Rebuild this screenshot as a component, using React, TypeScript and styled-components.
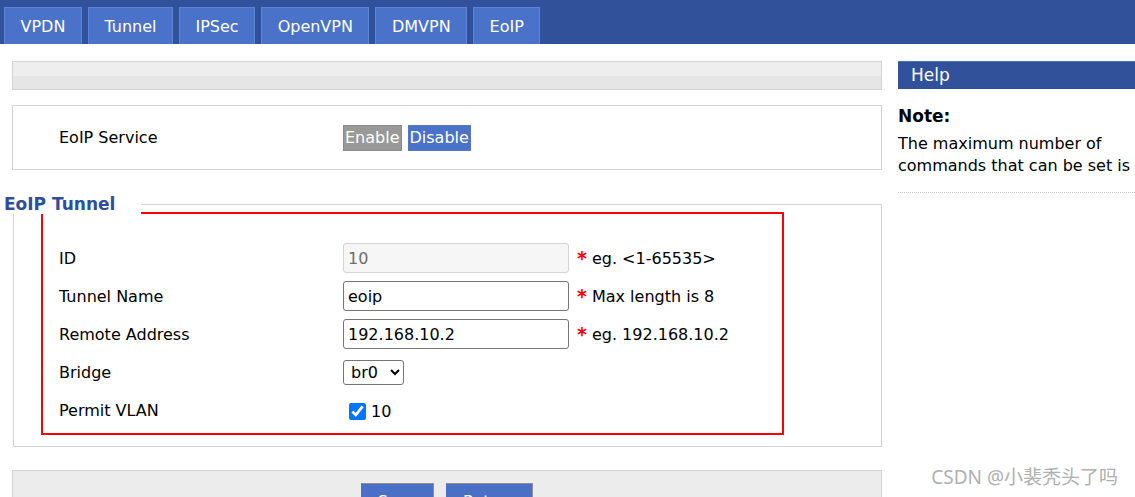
import React from "react";
import styled, { createGlobalStyle } from "styled-components";

const GlobalStyle = createGlobalStyle`
  html, body {
    margin: 0;
    padding: 0;
    background: #ffffff;
    overflow: hidden;
  }
  body {
    font-family: "DejaVu Sans", Verdana, sans-serif;
    font-size: 16px;
    color: #000000;
  }
`;

const tabs = ["VPDN", "Tunnel", "IPSec", "OpenVPN", "DMVPN", "EoIP"];

type FieldProps = {
  label: string;
  children: React.ReactNode;
};

const FormRow: React.FC<FieldProps> = ({ label, children }) => (
  <Row>
    <Label>{label}</Label>
    <Field>{children}</Field>
  </Row>
);

const App: React.FC = () => {
  return (
    <Page>
      <GlobalStyle />
      <TopBar>
        {tabs.map((t) => (
          <Tab key={t}>{t}</Tab>
        ))}
      </TopBar>

      <Content>
        <Main>
          <StatusBar />

          <ServiceBox>
            <Label>EoIP Service</Label>
            <ToggleGroup>
              <ToggleButton $active={false}>Enable</ToggleButton>
              <ToggleButton $active>Disable</ToggleButton>
            </ToggleGroup>
          </ServiceBox>

          <TunnelSection>
            <Legend>EoIP Tunnel</Legend>
            <Fieldset>
              <Highlight>
                <FormRow label="ID">
                  <TextInput disabled defaultValue="10" />
                  <Required>*</Required>
                  <Hint>eg. &lt;1-65535&gt;</Hint>
                </FormRow>
                <FormRow label="Tunnel Name">
                  <TextInput defaultValue="eoip" />
                  <Required>*</Required>
                  <Hint>Max length is 8</Hint>
                </FormRow>
                <FormRow label="Remote Address">
                  <TextInput defaultValue="192.168.10.2" />
                  <Required>*</Required>
                  <Hint>eg. 192.168.10.2</Hint>
                </FormRow>
                <FormRow label="Bridge">
                  <Select defaultValue="br0">
                    <option value="br0">br0</option>
                  </Select>
                </FormRow>
                <FormRow label="Permit VLAN">
                  <CheckLabel>
                    <Checkbox type="checkbox" defaultChecked />
                    10
                  </CheckLabel>
                </FormRow>
              </Highlight>
            </Fieldset>
          </TunnelSection>

          <ActionBar>
            <ActionButton>Save</ActionButton>
            <ActionButton>Return</ActionButton>
          </ActionBar>
        </Main>

        <HelpPanel>
          <HelpHeader>Help</HelpHeader>
          <NoteBlock>
            <NoteTitle>Note:</NoteTitle>
            <NoteText>
              The maximum number of commands that can be set is{" "}
              <Limit>100</Limit>.
            </NoteText>
          </NoteBlock>
        </HelpPanel>
      </Content>

      <Watermark>CSDN @小裴秃头了吗</Watermark>
    </Page>
  );
};

const Page = styled.div`
  position: relative;
  width: 1135px;
  height: 497px;
  overflow: hidden;
`;

const TopBar = styled.div`
  height: 44px;
  background: #31529b;
  display: flex;
  align-items: flex-end;
  gap: 6px;
  padding-left: 4px;
  box-sizing: border-box;
`;

const Tab = styled.div`
  height: 37px;
  box-sizing: border-box;
  padding: 0 15.5px;
  display: flex;
  align-items: center;
  background: #4a72c8;
  border: 1px solid #5d84d6;
  border-bottom: none;
  color: #ffffff;
  font-size: 16px;
`;

const Content = styled.div`
  display: flex;
  padding: 17px 0 0 12px;
  gap: 16px;
`;

const Main = styled.div`
  width: 870px;
  flex-shrink: 0;
`;

const StatusBar = styled.div`
  height: 29px;
  box-sizing: border-box;
  border: 1px solid #d3d3d3;
  background: linear-gradient(#eeeeee 50%, #e6e6e6 50%);
`;

const ServiceBox = styled.div`
  margin-top: 15px;
  height: 65px;
  box-sizing: border-box;
  border: 1px solid #d3d3d3;
  display: flex;
  align-items: center;
  padding-left: 46px;
`;

const Label = styled.div`
  width: 284px;
  flex-shrink: 0;
  font-size: 16px;
`;

const ToggleGroup = styled.div`
  display: flex;
  gap: 6px;
`;

const ToggleButton = styled.button<{ $active: boolean }>`
  height: 26px;
  padding: 0 1px;
  font-family: "DejaVu Sans", Verdana, sans-serif;
  font-size: 16px;
  color: #ffffff;
  background: ${(p) => (p.$active ? "#4a72c8" : "#999999")};
  border: 1px solid ${(p) => (p.$active ? "#5577c0" : "#8a8a8a")};
  border-radius: 0;
  cursor: pointer;
`;

const TunnelSection = styled.div`
  margin-top: 24px;
`;

const Legend = styled.div`
  position: relative;
  z-index: 1;
  width: fit-content;
  height: 20px;
  line-height: 20px;
  margin-left: -8px;
  margin-bottom: -10px;
  padding-right: 26px;
  background: #ffffff;
  font-size: 17px;
  font-weight: bold;
  color: #2d4f99;
`;

const Fieldset = styled.div`
  margin-left: 1px;
  height: 243px;
  box-sizing: border-box;
  border: 1px solid #d3d3d3;
  padding: 7px 0 0 27px;
`;

const Highlight = styled.div`
  width: 743px;
  box-sizing: border-box;
  border: 2px solid #ff0000;
  padding: 25px 0 4px 16px;
`;

const Row = styled.div`
  height: 38px;
  display: flex;
  align-items: center;
`;

const Field = styled.div`
  display: flex;
  align-items: center;
`;

const TextInput = styled.input`
  width: 226px;
  height: 30px;
  box-sizing: border-box;
  border: 1px solid #767676;
  border-radius: 3px;
  padding: 0 4px;
  font-family: "DejaVu Sans", Verdana, sans-serif;
  font-size: 16px;
  color: #000000;
  background: #ffffff;

  &:disabled {
    background: #f6f6f6;
    border-color: #d4d4d4;
    color: #6d6d6d;
  }
`;

const Required = styled.span`
  margin-left: 8px;
  color: #ff0000;
  font-size: 19px;
  font-weight: bold;
  line-height: 1;
`;

const Hint = styled.span`
  margin-left: 5px;
  font-size: 16px;
`;

const Select = styled.select`
  width: 61px;
  height: 25px;
  padding-left: 3px;
  font-family: "DejaVu Sans", Verdana, sans-serif;
  font-size: 16px;
  color: #000000;
  border: 1px solid #767676;
  border-radius: 3px;
  background: #ffffff;
`;

const CheckLabel = styled.label`
  display: flex;
  align-items: center;
  font-size: 16px;
  padding-top: 3px;
`;

const Checkbox = styled.input`
  width: 17px;
  height: 17px;
  margin: 0 5px 0 6px;
  accent-color: #0075ff;
`;

const ActionBar = styled.div`
  margin-top: 23px;
  height: 60px;
  box-sizing: border-box;
  background: #ececec;
  border: 1px solid #d3d3d3;
  display: flex;
  justify-content: center;
  align-items: flex-start;
  gap: 12px;
  padding-top: 12px;
`;

const ActionButton = styled.button`
  height: 36px;
  padding: 0 16px;
  font-family: "DejaVu Sans", Verdana, sans-serif;
  font-size: 16px;
  color: #ffffff;
  background: #4a70c6;
  border: 1px solid #8f8f8f;
  border-left-color: #4a70c6;
  border-bottom-color: #4a70c6;
`;

const HelpPanel = styled.div`
  width: 285px;
  flex-shrink: 0;
`;

const HelpHeader = styled.div`
  height: 28px;
  box-sizing: border-box;
  background: #31529b;
  border-top: 1px solid #4a6fc2;
  color: #ffffff;
  font-size: 17px;
  line-height: 27px;
  padding-left: 13px;
`;

const NoteBlock = styled.div`
  margin-top: 16px;
  padding-bottom: 15px;
  border-bottom: 1px dotted #c8c8c8;
`;

const NoteTitle = styled.div`
  font-size: 17px;
  font-weight: bold;
  line-height: 22px;
`;

const NoteText = styled.div`
  margin-top: 6px;
  font-size: 16px;
  line-height: 22px;
`;

const Limit = styled.span`
  color: #ff0000;
`;

const Watermark = styled.div`
  position: absolute;
  right: 17px;
  bottom: 7px;
  font-family: "Noto Sans", "Noto Sans CJK SC", sans-serif;
  font-size: 19px;
  color: #b0b0b0;
  text-shadow: 0 0 1px #ffffff;
`;

export default App;
